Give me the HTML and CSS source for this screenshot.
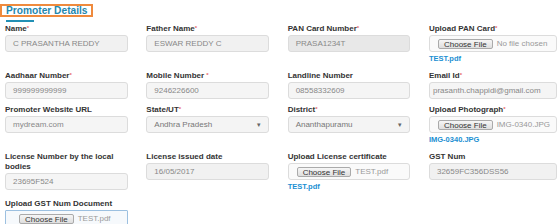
FILE: index.html
```html
<!DOCTYPE html>
<html lang="en">
<head>
  <meta charset="UTF-8" />
  <title>Promoter Details</title>
  <link rel="stylesheet" href="styles.css">
</head>
<body>

  <!-- Section heading -->
  <div class="section-head">
    <h2 class="section-title">Promoter Details</h2>
    <div class="title-rule"></div>
  </div>

  <div class="form-grid">
    <!-- Row 1 -->
    <div class="field">
      <label>Name<span class="req">*</span></label>
      <div class="input">C PRASANTHA REDDY</div>
    </div>
    <div class="field">
      <label>Father Name<span class="req">*</span></label>
      <div class="input">ESWAR REDDY C</div>
    </div>
    <div class="field">
      <label>PAN Card Number<span class="req">*</span></label>
      <div class="input input-locked">PRASA1234T</div>
    </div>
    <div class="field">
      <label>Upload PAN Card<span class="req">*</span></label>
      <div class="input file-input"><span class="file-btn">Choose File</span><span class="file-name">No file chosen</span></div>
      <a class="file-link" href="#">TEST.pdf</a>
    </div>

    <!-- Row 2 -->
    <div class="field">
      <label>Aadhaar Number<span class="req">*</span></label>
      <div class="input input-open">999999999999</div>
    </div>
    <div class="field">
      <label>Mobile Number <span class="req">*</span></label>
      <div class="input input-open">9246226600</div>
    </div>
    <div class="field">
      <label>Landline Number</label>
      <div class="input input-open">08558332609</div>
    </div>
    <div class="field">
      <label>Email Id<span class="req">*</span></label>
      <div class="input input-open input-long">prasanth.chappidi@gmail.com</div>
    </div>

    <!-- Row 3 -->
    <div class="field">
      <label>Promoter Website URL</label>
      <div class="input input-open">mydream.com</div>
    </div>
    <div class="field">
      <label>State/UT<span class="req">*</span></label>
      <div class="input select">Andhra Pradesh<span class="caret">&#9662;</span></div>
    </div>
    <div class="field">
      <label>District<span class="req">*</span></label>
      <div class="input select">Ananthapuramu<span class="caret">&#9662;</span></div>
    </div>
    <div class="field">
      <label>Upload Photograph<span class="req">*</span></label>
      <div class="input file-input"><span class="file-btn">Choose File</span><span class="file-name">IMG-0340.JPG</span></div>
      <a class="file-link" href="#">IMG-0340.JPG</a>
    </div>

    <!-- Row 4 -->
    <div class="field">
      <label>License Number by the local bodies</label>
      <div class="input input-open">23695F524</div>
    </div>
    <div class="field">
      <label>License issued date</label>
      <div class="input">16/05/2017</div>
    </div>
    <div class="field">
      <label>Upload License certificate</label>
      <div class="input file-input"><span class="file-btn">Choose File</span><span class="file-name">TEST.pdf</span></div>
      <a class="file-link" href="#">TEST.pdf</a>
    </div>
    <div class="field">
      <label>GST Num</label>
      <div class="input">32659FC356DSS56</div>
    </div>

    <!-- Row 5 -->
    <div class="field">
      <label>Upload GST Num Document</label>
      <div class="input file-input file-focus"><span class="file-btn">Choose File</span><span class="file-name">TEST.pdf</span></div>
    </div>
  </div>

</body>
</html>
```

FILE: styles.css
```css
body {
  margin: 0;
  font-family: "Liberation Sans", Arial, sans-serif;
  background: #fff;
  color: #333;
}
/* Heading with orange highlight box and teal rule */
.section-head {
  height: 24px;
}
.section-title {
  display: inline-block;
  margin: 0;
  padding: 0 3px 0 4px;
  border: 2px solid #ef8a3d;
  font-size: 10.2px;
  line-height: 9px;
  font-weight: bold;
  color: #1f87ad;
}
.title-rule {
  width: 28px;
  height: 2px;
  margin: 2px 0 0 6px;
  background: #2290b5;
}
/* Four column form */
.form-grid {
  display: grid;
  grid-template-columns: repeat(4, 1fr);
  column-gap: 18.5px;
  row-gap: 6px;
  padding: 0 2px 0 5px;
  align-items: start;
}
.field {
  display: flex;
  flex-direction: column;
}
.field label {
  font-size: 8px;
  line-height: 10px;
  font-weight: bold;
  color: #333;
  margin-bottom: 1px;
}
.req {
  color: #e86a6a;
  font-size: 6px;
  vertical-align: top;
  line-height: 8px;
}
.input {
  box-sizing: border-box;
  height: 17px;
  display: flex;
  align-items: center;
  padding: 0 7px;
  border: 1px solid #dcdcdc;
  border-radius: 3px;
  background: #f1f1f1;
  font-size: 8px;
  color: #888;
  white-space: nowrap;
  overflow: hidden;
}
.input-open {
  background: #f5f5f5;
}
.input-long {
  padding: 0 3px;
}
.input-locked {
  background: #e8e8e8;
}
.select {
  justify-content: space-between;
  background: #f4f4f4;
  color: #777;
}
.caret {
  font-size: 7px;
  color: #666;
}
/* Fake file inputs */
.file-input {
  background: #fafafa;
  padding: 0 6px 0 8px;
}
.file-focus {
  border-color: #9cc0e0;
  background: #f6f9fc;
  border-radius: 1px;
  padding-left: 13px;
}
.file-btn {
  height: 10px;
  line-height: 9px;
  padding: 0 5px;
  border: 1px solid #aaa;
  border-radius: 2px;
  background: linear-gradient(#f6f6f6, #dedede);
  color: #333;
  font-size: 8px;
  box-sizing: border-box;
}
.file-name {
  margin-left: 4px;
  color: #999;
}
.file-link {
  font-size: 7.5px;
  line-height: 13px;
  font-weight: bold;
  color: #1b8fd2;
  text-decoration: none;
}
```
